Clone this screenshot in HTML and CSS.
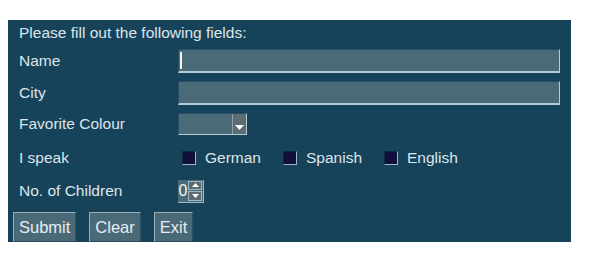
FILE: index.html
```html
<!DOCTYPE html>
<html lang="en">
<head>
    <meta charset="UTF-8">
    <title>Form</title>
    <link rel="stylesheet" href="styles.css">
</head>
<body>
    <div class="panel">
        <div class="row head">Please fill out the following fields:</div>

        <div class="row name">
            <span class="label">Name</span>
            <div class="field wide"><span class="caret"></span></div>
        </div>

        <div class="row city">
            <span class="label">City</span>
            <div class="field wide"></div>
        </div>

        <div class="row colour">
            <span class="label">Favorite Colour</span>
            <div class="field select">
                <span class="select-btn">
                    <svg width="9" height="6" viewBox="0 0 9 6"><path d="M0 0h9L4.5 5z" fill="#fff"/></svg>
                </span>
            </div>
        </div>

        <div class="row speak">
            <span class="label">I speak</span>
            <div class="langs">
                <span class="check"></span><span class="lang">German</span>
                <span class="check"></span><span class="lang">Spanish</span>
                <span class="check"></span><span class="lang">English</span>
            </div>
        </div>

        <div class="row children">
            <span class="label">No. of Children</span>
            <div class="spin">
                <span class="spin-val">0</span>
                <span class="spin-btns">
                    <span class="spin-btn"><svg width="7" height="4" viewBox="0 0 7 4"><path d="M0 4h7L3.5 0z" fill="#fff"/></svg></span>
                    <span class="spin-btn"><svg width="7" height="4" viewBox="0 0 7 4"><path d="M0 0h7L3.5 4z" fill="#fff"/></svg></span>
                </span>
            </div>
        </div>

        <div class="row buttons">
            <button class="btn">Submit</button>
            <button class="btn">Clear</button>
            <button class="btn">Exit</button>
        </div>
    </div>
</body>
</html>
```

FILE: styles.css
```css
body {
    margin: 20px 0 0 8px;
    background: #fff;
    font-family: 'Liberation Sans', Arial, sans-serif;
}

.panel {
    width: 563px;
    height: 222px;
    background-color: #17435a;
    color: #dde5ea;
    font-size: 15.5px;
    display: flex;
    flex-direction: column;
}

.row {
    display: flex;
    align-items: center;
    padding-left: 11px;
}

.head { height: 25px; margin-bottom: 4px; }
.name { height: 24px; margin-bottom: 8px; }
.city { height: 24px; margin-bottom: 8px; }
.colour { height: 22px; margin-bottom: 12px; }
.speak { height: 22px; margin-bottom: 11px; }
.children { height: 22px; margin-bottom: 10px; }

.label {
    width: 159px;
    flex-shrink: 0;
}

/* text boxes */
.field {
    height: 100%;
    box-sizing: border-box;
    background-color: #4b6a78;
    border-top: 1px solid #2a4e60;
    border-left: 1px solid #2a4e60;
    border-right: 1px solid #b3ccd8;
    border-bottom: 2px solid #b3ccd8;
    display: flex;
    align-items: center;
}

.wide { width: 382px; }

.caret {
    width: 2px;
    height: 17px;
    margin-left: 1px;
    background: #f2f6f8;
}

.select {
    width: 69px;
    justify-content: flex-end;
    border-bottom-width: 1px;
}

.select-btn {
    width: 14px;
    height: 100%;
    background: #5d6c73;
    border-left: 1px solid #8aa0aa;
    display: flex;
    align-items: flex-end;
    justify-content: center;
    padding-bottom: 3px;
    box-sizing: border-box;
}

/* checkboxes */
.langs {
    display: flex;
    align-items: center;
    padding-left: 4px;
}

.check {
    width: 12px;
    height: 12px;
    background: #11103d;
    border-top: 1px solid #0d2a3a;
    border-left: 1px solid #0d2a3a;
    border-right: 1px solid #9fb8c5;
    border-bottom: 1px solid #9fb8c5;
    margin-right: 9px;
}

.lang { margin-right: 22px; }

/* spinner */
.spin {
    width: 26px;
    height: 23px;
    box-sizing: border-box;
    display: flex;
    border-bottom: 1px solid #9fb8c5;
    border-right: 1px solid #9fb8c5;
    background: #4b6a78;
}

.spin-val {
    width: 10px;
    color: #f2f6f8;
    font-size: 16px;
    line-height: 21px;
    text-align: center;
}

.spin-btns {
    display: flex;
    flex-direction: column;
    width: 14px;
    padding: 1px 0;
    gap: 1px;
}

.spin-btn {
    flex: 1;
    background: #5d6c73;
    border: 1px solid #9fb8c5;
    display: flex;
    align-items: center;
    justify-content: center;
}

/* buttons */
.buttons {
    height: 30px;
    padding-left: 5px;
    gap: 13px;
    align-items: stretch;
}

.btn {
    margin: 0;
    background-color: #4b6a78;
    color: #e6edf0;
    font-family: 'Liberation Sans', Arial, sans-serif;
    font-size: 16.5px;
    padding: 0 5px;
    border-top: 1px solid #98b0bc;
    border-left: 1px solid #98b0bc;
    border-right: 1px solid #2c4d5e;
    border-bottom: 1px solid #2c4d5e;
    border-radius: 0;
}
```
